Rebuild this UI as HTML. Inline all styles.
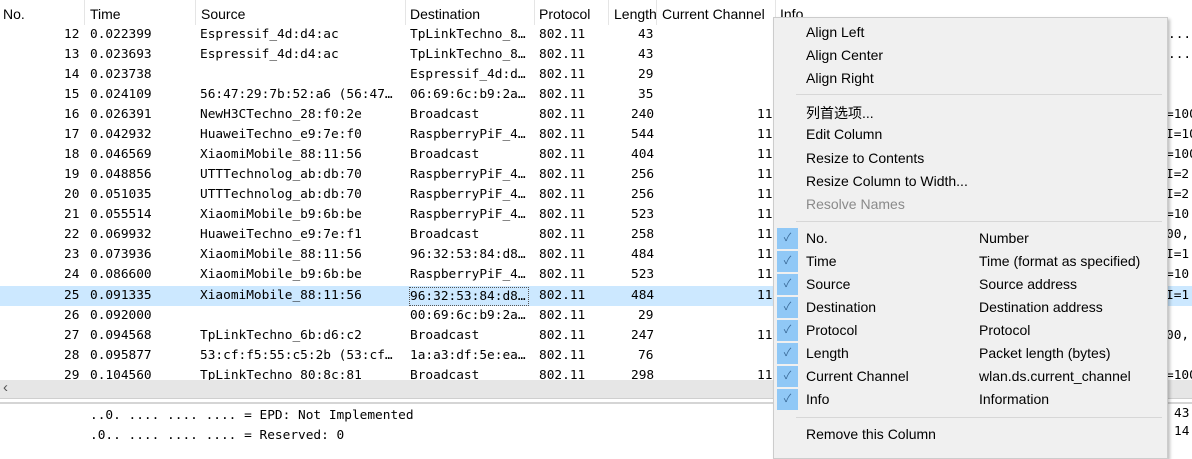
<!DOCTYPE html>
<html><head><meta charset="utf-8"><style>
body{margin:0;width:1192px;height:449px;overflow:hidden;background:#fff;position:relative;font-family:"Liberation Sans","Noto Sans CJK SC",sans-serif;}
.h{position:absolute;top:0;height:25px;font-size:14px;line-height:28px;color:#000;}
.sep{position:absolute;top:0;width:1px;height:25px;background:#e5e5e5;}
.r{position:absolute;left:0;width:1192px;height:20px;font-family:"DejaVu Sans Mono","Liberation Mono",monospace;font-size:12.8px;line-height:20px;color:#000;}
.r span{position:absolute;white-space:nowrap;}
.sel{background:#cce8ff;}
.m{position:absolute;left:773px;top:17px;width:393px;height:440px;background:#f0f0f0;border:1px solid #ccc;box-shadow:2px 2px 3px rgba(0,0,0,.25);font-size:14px;}
.mi{position:absolute;left:32px;white-space:nowrap;}
.mi2{position:absolute;left:205px;white-space:nowrap;}
.ms{position:absolute;left:22px;width:366px;height:1px;background:#d7d7d7;}
.cb{position:absolute;left:3px;width:21px;height:21px;background:#90c8f6;color:#3a6a98;font-size:11px;text-align:center;line-height:21px;}
.b{position:absolute;font-family:"DejaVu Sans Mono","Liberation Mono",monospace;font-size:12.8px;white-space:nowrap;}
</style></head><body>
<div class="h" style="left:3px">No.</div>
<div class="sep" style="left:84px"></div>
<div class="h" style="left:90px">Time</div>
<div class="sep" style="left:195px"></div>
<div class="h" style="left:201px">Source</div>
<div class="sep" style="left:405px"></div>
<div class="h" style="left:410px">Destination</div>
<div class="sep" style="left:534px"></div>
<div class="h" style="left:539px">Protocol</div>
<div class="sep" style="left:608px"></div>
<div class="h" style="left:614px;width:42px;overflow:hidden">Length</div>
<div class="sep" style="left:656px"></div>
<div class="h" style="left:662px">Current Channel</div>
<div class="sep" style="left:775px"></div>
<div class="h" style="left:780px">Info</div>

<div class="r" style="top:25px"><span style="left:64px">12</span><span style="left:90px">0.022399</span><span style="left:200px">Espressif_4d:d4:ac</span><span style="left:410px">TpLinkTechno_8…</span><span style="left:539px">802.11</span><span style="left:638px">43</span><span style="left:1168px">...</span></div>
<div class="r" style="top:45px"><span style="left:64px">13</span><span style="left:90px">0.023693</span><span style="left:200px">Espressif_4d:d4:ac</span><span style="left:410px">TpLinkTechno_8…</span><span style="left:539px">802.11</span><span style="left:638px">43</span><span style="left:1168px">...</span></div>
<div class="r" style="top:65px"><span style="left:64px">14</span><span style="left:90px">0.023738</span><span style="left:410px">Espressif_4d:d…</span><span style="left:539px">802.11</span><span style="left:638px">29</span></div>
<div class="r" style="top:85px"><span style="left:64px">15</span><span style="left:90px">0.024109</span><span style="left:200px">56:47:29:7b:52:a6 (56:47…</span><span style="left:410px">06:69:6c:b9:2a…</span><span style="left:539px">802.11</span><span style="left:638px">35</span></div>
<div class="r" style="top:105px"><span style="left:64px">16</span><span style="left:90px">0.026391</span><span style="left:200px">NewH3CTechno_28:f0:2e</span><span style="left:410px">Broadcast</span><span style="left:539px">802.11</span><span style="left:631px">240</span><span style="left:757px">11</span><span style="left:1166px">=100</span></div>
<div class="r" style="top:125px"><span style="left:64px">17</span><span style="left:90px">0.042932</span><span style="left:200px">HuaweiTechno_e9:7e:f0</span><span style="left:410px">RaspberryPiF_4…</span><span style="left:539px">802.11</span><span style="left:631px">544</span><span style="left:757px">11</span><span style="left:1166px">I=10</span></div>
<div class="r" style="top:145px"><span style="left:64px">18</span><span style="left:90px">0.046569</span><span style="left:200px">XiaomiMobile_88:11:56</span><span style="left:410px">Broadcast</span><span style="left:539px">802.11</span><span style="left:631px">404</span><span style="left:757px">11</span><span style="left:1166px">=100</span></div>
<div class="r" style="top:165px"><span style="left:64px">19</span><span style="left:90px">0.048856</span><span style="left:200px">UTTTechnolog_ab:db:70</span><span style="left:410px">RaspberryPiF_4…</span><span style="left:539px">802.11</span><span style="left:631px">256</span><span style="left:757px">11</span><span style="left:1166px">I=2</span></div>
<div class="r" style="top:185px"><span style="left:64px">20</span><span style="left:90px">0.051035</span><span style="left:200px">UTTTechnolog_ab:db:70</span><span style="left:410px">RaspberryPiF_4…</span><span style="left:539px">802.11</span><span style="left:631px">256</span><span style="left:757px">11</span><span style="left:1166px">I=2</span></div>
<div class="r" style="top:205px"><span style="left:64px">21</span><span style="left:90px">0.055514</span><span style="left:200px">XiaomiMobile_b9:6b:be</span><span style="left:410px">RaspberryPiF_4…</span><span style="left:539px">802.11</span><span style="left:631px">523</span><span style="left:757px">11</span><span style="left:1166px">=10</span></div>
<div class="r" style="top:225px"><span style="left:64px">22</span><span style="left:90px">0.069932</span><span style="left:200px">HuaweiTechno_e9:7e:f1</span><span style="left:410px">Broadcast</span><span style="left:539px">802.11</span><span style="left:631px">258</span><span style="left:757px">11</span><span style="left:1166px">00,</span></div>
<div class="r" style="top:245px"><span style="left:64px">23</span><span style="left:90px">0.073936</span><span style="left:200px">XiaomiMobile_88:11:56</span><span style="left:410px">96:32:53:84:d8…</span><span style="left:539px">802.11</span><span style="left:631px">484</span><span style="left:757px">11</span><span style="left:1166px">I=1</span></div>
<div class="r" style="top:265px"><span style="left:64px">24</span><span style="left:90px">0.086600</span><span style="left:200px">XiaomiMobile_b9:6b:be</span><span style="left:410px">RaspberryPiF_4…</span><span style="left:539px">802.11</span><span style="left:631px">523</span><span style="left:757px">11</span><span style="left:1166px">=10</span></div>
<div class="r sel" style="top:286px"><span style="left:64px">25</span><span style="left:90px">0.091335</span><span style="left:200px">XiaomiMobile_88:11:56</span><span style="left:409px;top:1px;line-height:17px;border:1px dotted #555;padding-right:2px">96:32:53:84:d8…</span><span style="left:539px">802.11</span><span style="left:631px">484</span><span style="left:757px">11</span><span style="left:1166px">I=1</span></div>
<div class="r" style="top:306px"><span style="left:64px">26</span><span style="left:90px">0.092000</span><span style="left:410px">00:69:6c:b9:2a…</span><span style="left:539px">802.11</span><span style="left:638px">29</span></div>
<div class="r" style="top:326px"><span style="left:64px">27</span><span style="left:90px">0.094568</span><span style="left:200px">TpLinkTechno_6b:d6:c2</span><span style="left:410px">Broadcast</span><span style="left:539px">802.11</span><span style="left:631px">247</span><span style="left:757px">11</span><span style="left:1166px">00,</span></div>
<div class="r" style="top:346px"><span style="left:64px">28</span><span style="left:90px">0.095877</span><span style="left:200px">53:cf:f5:55:c5:2b (53:cf…</span><span style="left:410px">1a:a3:df:5e:ea…</span><span style="left:539px">802.11</span><span style="left:638px">76</span></div>
<div class="r" style="top:366px;height:14px;overflow:hidden"><span style="left:64px">29</span><span style="left:90px">0.104560</span><span style="left:200px">TpLinkTechno_80:8c:81</span><span style="left:410px">Broadcast</span><span style="left:539px">802.11</span><span style="left:631px">298</span><span style="left:757px">11</span><span style="left:1166px">=100</span></div>
<div style="position:absolute;left:0;top:380px;width:1192px;height:18px;background:#e6e6e6;border-bottom:1px solid #cfcfcf"></div>
<div style="position:absolute;left:3px;top:379px;font-size:15px;color:#555">‹</div>
<div style="position:absolute;left:0;top:402px;width:1192px;height:2px;background:#d5d5d5"></div>
<div class="b" style="left:90px;top:408px">..0. .... .... .... = EPD: Not Implemented</div>
<div class="b" style="left:90px;top:428px">.0.. .... .... .... = Reserved: 0</div>
<div class="b" style="left:1174px;top:406px">43</div>
<div class="b" style="left:1174px;top:424px">14</div>

<div class="m">
<div class="mi" style="top:6px">Align Left</div>
<div class="mi" style="top:29px">Align Center</div>
<div class="mi" style="top:52px">Align Right</div>
<div class="ms" style="top:76px"></div>
<div class="mi" style="top:85px">列首选项...</div>
<div class="mi" style="top:108px">Edit Column</div>
<div class="mi" style="top:132px">Resize to Contents</div>
<div class="mi" style="top:155px">Resize Column to Width...</div>
<div class="mi" style="top:178px;color:#8a8a8a">Resolve Names</div>
<div class="ms" style="top:203px"></div>
<div class="cb" style="top:210px">✓</div><div class="mi" style="top:212px">No.</div><div class="mi2" style="top:212px">Number</div>
<div class="cb" style="top:233px">✓</div><div class="mi" style="top:235px">Time</div><div class="mi2" style="top:235px">Time (format as specified)</div>
<div class="cb" style="top:256px">✓</div><div class="mi" style="top:258px">Source</div><div class="mi2" style="top:258px">Source address</div>
<div class="cb" style="top:279px">✓</div><div class="mi" style="top:281px">Destination</div><div class="mi2" style="top:281px">Destination address</div>
<div class="cb" style="top:302px">✓</div><div class="mi" style="top:304px">Protocol</div><div class="mi2" style="top:304px">Protocol</div>
<div class="cb" style="top:325px">✓</div><div class="mi" style="top:327px">Length</div><div class="mi2" style="top:327px">Packet length (bytes)</div>
<div class="cb" style="top:348px">✓</div><div class="mi" style="top:350px">Current Channel</div><div class="mi2" style="top:350px">wlan.ds.current_channel</div>
<div class="cb" style="top:371px">✓</div><div class="mi" style="top:373px">Info</div><div class="mi2" style="top:373px">Information</div>
<div class="ms" style="top:399px"></div>
<div class="mi" style="top:408px">Remove this Column</div>
</div>
</body></html>
